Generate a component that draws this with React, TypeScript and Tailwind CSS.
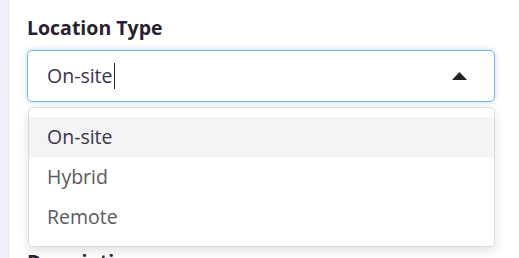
import { useState } from 'react';

const options = ['On-site', 'Hybrid', 'Remote'];

export default function App() {
  const [value] = useState('On-site');

  return (
    <div className="flex h-[258px] w-[519px] overflow-hidden bg-[#eef0f5] font-['Open_Sans',sans-serif]">
      <div className="ml-[10px] flex-1 bg-white pl-[17px] pr-[24px] pt-[14px]">
        <label className="block text-[19.5px] font-bold leading-[27px] text-[#2a2130]">Location Type</label>

        <div className="relative mt-[9px]">
          <div className="flex h-[52px] items-center rounded-[5px] border border-[#76b4ee] pl-[19px] pr-[27px] shadow-[0_0_6px_rgba(120,180,240,0.45)]">
            <span className="text-[19.5px] text-[#3b3350]">{value}</span>
            <span className="ml-[1px] h-[26px] w-[1.5px] bg-[#222]" />
            <svg className="ml-auto" width="15" height="9" viewBox="0 0 15 9">
              <path d="M7.5 0 L15 8 L0 8 Z" fill="#222" />
            </svg>
          </div>

          <ul className="absolute left-[1px] right-0 top-[57px] z-10 rounded-[5px] border border-[#dcdcdc] bg-white py-[9px] shadow-[0_4px_12px_rgba(0,0,0,0.12)]">
            {options.map((o) => (
              <li
                key={o}
                className={`flex h-[40px] items-center pl-[18px] text-[19.5px] ${
                  o === value ? 'bg-[#f4f4f4] text-[#3b3350]' : 'text-[#5a5a5a]'
                }`}
              >
                {o}
              </li>
            ))}
          </ul>
        </div>

        <label className="mt-[146px] block text-[19.5px] font-bold leading-[27px] text-[#2a2130]">Description</label>
      </div>
    </div>
  );
}
